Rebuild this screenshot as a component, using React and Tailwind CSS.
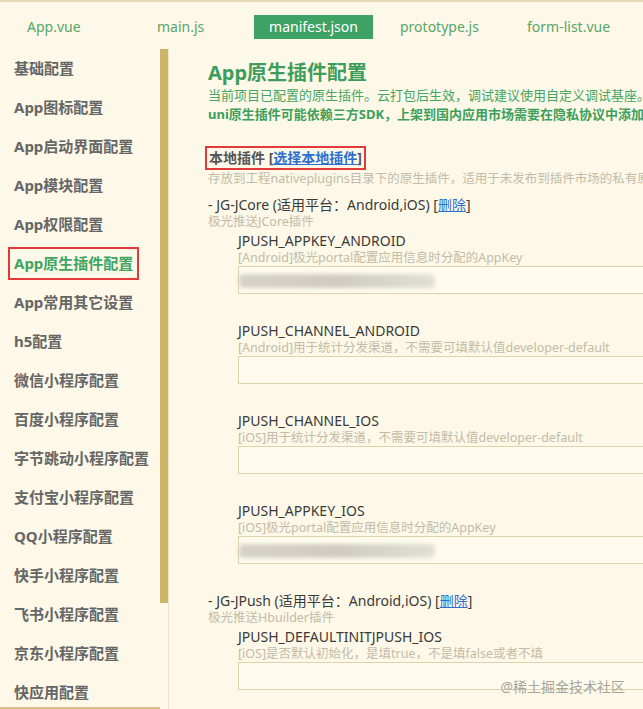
import React from 'react';

const tabs = ['App.vue', 'main.js', 'manifest.json', 'prototype.js', 'form-list.vue'];

const menu = [
  '基础配置',
  'App图标配置',
  'App启动界面配置',
  'App模块配置',
  'App权限配置',
  'App原生插件配置',
  'App常用其它设置',
  'h5配置',
  '微信小程序配置',
  '百度小程序配置',
  '字节跳动小程序配置',
  '支付宝小程序配置',
  'QQ小程序配置',
  '快手小程序配置',
  '飞书小程序配置',
  '京东小程序配置',
  '快应用配置',
];

const font = { fontFamily: '"Noto Sans", "Noto Sans CJK SC", sans-serif' };

function Blur() {
  return (
    <div className="absolute left-0 top-[4px] flex h-[20px] w-[200px] items-center">
      <div className="h-[14px] w-[196px] rounded-sm bg-gradient-to-r from-[#d6d2c8] via-[#cfcbc3] to-[#e2dfd7] blur-[2px]" />
    </div>
  );
}

function Field({ name, desc, blurred }) {
  return (
    <div className="pl-[30px]">
      <div className="h-[18px] text-[14px] leading-[18px] text-[#3a3a3a]">{name}</div>
      <div className="h-[16px] whitespace-nowrap text-[12.5px] leading-[16px] text-[#c2bca8]">{desc}</div>
      <div className="relative h-[28px] w-[420px] border border-[#dcd3ad] bg-[#fffcef]">
        {blurred && <Blur />}
      </div>
    </div>
  );
}

function Plugin({ name, sub }) {
  return (
    <>
      <div className="h-[18px] whitespace-nowrap text-[14px] leading-[18px] text-[#3a3a3a]">
        - {name} (适用平台：Android,iOS) [<span className="text-[#2d6fd0] underline">删除</span>]
      </div>
      <div className="h-[16px] text-[12.5px] leading-[16px] text-[#c2bca8]">{sub}</div>
    </>
  );
}

export default function App() {
  return (
    <div className="h-[709px] w-[643px] overflow-hidden bg-[#fdf8e7]" style={font}>
      {/* Tabs */}
      <div className="h-[2px] bg-[#e6dcb4]" />
      <div className="relative flex h-[47px] items-center pt-[2px]">
        <div className="flex h-[24px] items-center text-[14px] text-[#58a66a]">
          <div className="ml-[27px] w-[130px]">App.vue</div>
          <div className="w-[97px]">main.js</div>
          <div className="flex h-[24px] w-[119px] items-center justify-center bg-[#3ea264] text-white">manifest.json</div>
          <div className="ml-[27px] w-[127px]">prototype.js</div>
          <div>form-list.vue</div>
        </div>
      </div>

      <div className="flex h-[660px]">
        {/* Sidebar */}
        <div className="relative flex w-[169px] border-r border-[#ece4c6]">
          <div className="w-[160px] border-b-2 border-[#d9c488]">
            <div>
              {menu.map((m, i) => (
                <div
                  key={m}
                  className={`flex h-[39px] items-center whitespace-nowrap pl-[14px] text-[15px] font-bold ${i === 5 ? 'text-[#3ea562]' : 'text-[#666666]'}`}
                >
                  {i === 5 ? (
                    <span className="-ml-[6px] border-[2.5px] border-[#e23a3a] px-[4px] py-[3px]">{m}</span>
                  ) : (
                    m
                  )}
                </div>
              ))}
            </div>
          </div>
          <div className="mt-0 h-[554px] w-[8px] bg-[#cdb46a]" />
        </div>

        {/* Content */}
        <div className="relative min-w-0 flex-1 pl-[39px] pt-[11px]">
          <div className="h-[26px] whitespace-nowrap text-[20px] font-bold leading-[26px] text-[#3d9e5c]">App原生插件配置</div>
          <div className="h-[18px] whitespace-nowrap text-[13px] leading-[18px] text-[#46a563]">
            当前项目已配置的原生插件。云打包后生效，调试建议使用自定义调试基座。
          </div>
          <div className="h-[20px] whitespace-nowrap text-[13px] font-bold leading-[20px] text-[#3c9f5b]">
            uni原生插件可能依赖三方SDK，上架到国内应用市场需要在隐私协议中添加三方SDK说明
          </div>
          <div className="mt-[21px] h-[30px] whitespace-nowrap">
            <span className="-ml-[3px] inline-block border-[2.5px] border-[#e23a3a] px-[2px] text-[14px] font-bold leading-[20px] text-[#555555]">
              本地插件 [<span className="text-[#2d6fd0] underline">选择本地插件</span>]
            </span>
          </div>
          <div className="-mt-[4px] h-[20px] whitespace-nowrap text-[12.5px] leading-[16px] text-[#c2bca8]">
            存放到工程nativeplugins目录下的原生插件，适用于未发布到插件市场的私有原生插件
          </div>
          <div className="pt-[5px]">
            <Plugin name="JG-JCore" sub="极光推送JCore插件" />
            <div className="flex flex-col gap-[28px] pt-[2px]">
              <Field name="JPUSH_APPKEY_ANDROID" desc="[Android]极光portal配置应用信息时分配的AppKey" blurred />
              <Field name="JPUSH_CHANNEL_ANDROID" desc="[Android]用于统计分发渠道，不需要可填默认值developer-default" />
              <Field name="JPUSH_CHANNEL_IOS" desc="[iOS]用于统计分发渠道，不需要可填默认值developer-default" />
              <Field name="JPUSH_APPKEY_IOS" desc="[iOS]极光portal配置应用信息时分配的AppKey" blurred />
            </div>
            <div className="pt-[28px]">
              <Plugin name="JG-JPush" sub="极光推送Hbuilder插件" />
              <div className="pt-[2px]">
                <Field name="JPUSH_DEFAULTINITJPUSH_IOS" desc="[iOS]是否默认初始化，是填true，不是填false或者不填" />
              </div>
            </div>
          </div>
          <div className="absolute bottom-[12px] right-[18px] text-[14px] text-[#a8a598]">@稀土掘金技术社区</div>
        </div>
      </div>
    </div>
  );
}
